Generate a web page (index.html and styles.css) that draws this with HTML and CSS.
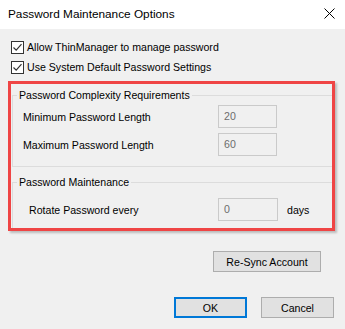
FILE: index.html
```html
<!DOCTYPE html>
<html>
<head>
<meta charset="utf-8">
<link rel="stylesheet" href="styles.css">
</head>
<body>
<div class="dialog">
  <div class="titlebar">
    <span class="title">Password Maintenance Options</span>
    <svg class="close" width="11" height="11" viewBox="0 0 11 11"><path d="M0.5 0.5 L10.5 10.5 M10.5 0.5 L0.5 10.5" stroke="#000" stroke-width="1" fill="none"/></svg>
  </div>
  <div class="checks">
    <label class="check"><span class="box"><svg width="11" height="11" viewBox="0 0 11 11"><path d="M1.5 5.5 L4.2 8.2 L9.5 2.2" stroke="#333" stroke-width="1.2" fill="none"/></svg></span><span>Allow ThinManager to manage password</span></label>
    <label class="check"><span class="box"><svg width="11" height="11" viewBox="0 0 11 11"><path d="M1.5 5.5 L4.2 8.2 L9.5 2.2" stroke="#333" stroke-width="1.2" fill="none"/></svg></span><span>Use System Default Password Settings</span></label>
  </div>
  <div class="highlight">
    <fieldset class="group g1">
      <legend>Password Complexity Requirements</legend>
      <div class="row">
        <span class="lbl">Minimum Password Length</span>
        <span class="field">20</span>
      </div>
      <div class="row">
        <span class="lbl">Maximum Password Length</span>
        <span class="field">60</span>
      </div>
    </fieldset>
    <fieldset class="group g2">
      <legend>Password Maintenance</legend>
      <div class="row rot">
        <span class="lbl">Rotate Password every</span>
        <span class="field wide">0</span>
        <span class="unit">days</span>
      </div>
    </fieldset>
  </div>
  <div class="resync-row">
    <button class="btn resync">Re-Sync Account</button>
  </div>
  <div class="actions">
    <button class="btn ok">OK</button>
    <button class="btn">Cancel</button>
  </div>
</div>
</body>
</html>
```
FILE: styles.css
```css
html, body {
  margin: 0;
  padding: 0;
}
body {
  width: 345px;
  height: 329px;
  background: #f0f0f0;
  font-family: "Liberation Sans", Arial, sans-serif;
  font-size: 10.6px;
  color: #000;
  overflow: hidden;
}
.dialog {
  width: 345px;
  height: 329px;
  display: flex;
  flex-direction: column;
}
.titlebar {
  height: 29px;
  background: #fff;
  display: flex;
  align-items: center;
  justify-content: space-between;
  padding: 0 10px 0 8px;
  box-sizing: border-box;
}
.title {
  font-size: 11.8px;
  margin-top: -1px;
}
.close {
  display: block;
  margin-top: -3px;
}
.checks {
  display: flex;
  flex-direction: column;
  gap: 7px;
  padding: 12px 0 0 11px;
}
.check {
  display: flex;
  align-items: center;
  height: 13px;
  line-height: 13px;
}
.box {
  width: 13px;
  height: 13px;
  box-sizing: border-box;
  border: 1px solid #333;
  background: #fff;
  display: flex;
  align-items: center;
  justify-content: center;
  margin-right: 3px;
}
.box svg {
  display: block;
}
.highlight {
  margin: 7px 0 0 8px;
  width: 327px;
  height: 150px;
  box-sizing: border-box;
  border: 3px solid #ef4545;
  box-shadow: 2px 2px 2px rgba(0, 0, 0, 0.22);
  display: flex;
  flex-direction: column;
}
.group {
  margin: 0 0 0 1px;
  padding: 0;
  border: 1px solid #dcdcdc;
  border-right: none;
  min-width: 0;
}
.group legend {
  margin-left: 4px;
  padding: 0 2px;
  line-height: 14px;
  font-size: 10.6px;
}
.g1 {
  margin-top: 4px;
  padding: 3px 0 10px 0;
  display: flex;
  flex-direction: column;
  gap: 5px;
}
.g1 .row {
  margin-left: 10px;
}
.g2 {
  margin-top: 8px;
  padding: 9px 0 0 0;
  border-bottom: none;
  flex: 1;
}
.g2 .row {
  margin-left: 16px;
}
.row {
  display: grid;
  grid-template-columns: 195px 59px;
  align-items: center;
  height: 23px;
}
.row.rot {
  grid-template-columns: 189px 60px auto;
}
.field {
  height: 23px;
  box-sizing: border-box;
  border: 1px solid #cacaca;
  background: #f0f0f0;
  color: #6d6d6d;
  padding: 3px 0 0 5px;
  line-height: 15px;
}
.unit {
  padding-left: 9px;
}
.resync-row {
  display: flex;
  justify-content: flex-end;
  padding: 20px 24px 0 0;
}
.btn {
  font-family: "Liberation Sans", Arial, sans-serif;
  font-size: 10.6px;
  color: #000;
  background: #e1e1e1;
  border: 1px solid #adadad;
  height: 21px;
  padding: 0;
  margin: 0;
  box-sizing: border-box;
  width: 73px;
}
.btn.resync {
  width: 108px;
}
.btn.ok {
  border: 2px solid #0078d7;
}
.actions {
  display: flex;
  justify-content: flex-end;
  gap: 14px;
  padding: 25px 11px 0 0;
}
```
